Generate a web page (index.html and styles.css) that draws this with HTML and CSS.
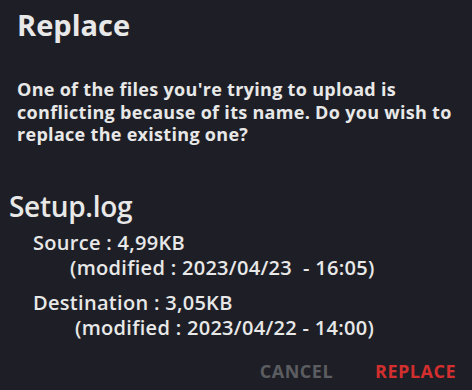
FILE: index.html
```html
<!DOCTYPE html>
<html>
<head>
<meta charset="utf-8">
<link rel="stylesheet" href="styles.css">
</head>
<body>
<div class="dialog">
  <h1 class="title">Replace</h1>
  <p class="message">One of the files you're trying to upload is conflicting because of its name. Do you wish to replace the existing one?</p>
  <h2 class="filename">Setup.log</h2>
  <div class="info">
    <div class="entry">
      <div class="size">Source : 4,99KB</div>
      <div class="modified mod-src">(modified : 2023/04/23&nbsp; - 16:05)</div>
    </div>
    <div class="entry">
      <div class="size">Destination : 3,05KB</div>
      <div class="modified mod-dst">(modified : 2023/04/22 - 14:00)</div>
    </div>
  </div>
  <div class="actions">
    <span class="btn btn-cancel">CANCEL</span>
    <span class="btn btn-replace">REPLACE</span>
  </div>
</div>
</body>
</html>
```
FILE: styles.css
```css
html, body {
  margin: 0;
  padding: 0;
  background: #1e1f26;
}
body {
  width: 472px;
  height: 390px;
  overflow: hidden;
  font-family: "Open Sans", "Liberation Sans", sans-serif;
  color: #e8e8e8;
}
.dialog {
  display: flex;
  flex-direction: column;
}
.title {
  margin: 7px 0 0 17px;
  font-size: 29px;
  font-weight: 700;
  line-height: 36px;
}
.message {
  margin: 35px 0 0 17px;
  width: 452px;
  font-size: 18px;
  font-weight: 700;
  line-height: 22.5px;
  letter-spacing: 0.3px;
}
.filename {
  margin: 42px 0 0 9px;
  font-size: 28px;
  font-weight: 600;
  line-height: 36px;
  letter-spacing: -0.3px;
}
.info {
  display: flex;
  flex-direction: column;
  gap: 10px;
  margin: 6px 0 0 33px;
  font-size: 20px;
  font-weight: 600;
  line-height: 25px;
  letter-spacing: 0.3px;
}
.mod-src { padding-left: 37px; }
.mod-dst { padding-left: 42px; }
.actions {
  display: flex;
  justify-content: flex-end;
  gap: 42px;
  margin: 19px 16px 0 0;
  font-size: 18px;
  font-weight: 700;
  line-height: 24px;
  letter-spacing: 0.5px;
}
.btn-cancel { color: #5c5d61; }
.btn-replace { color: #d32f2f; }
```
